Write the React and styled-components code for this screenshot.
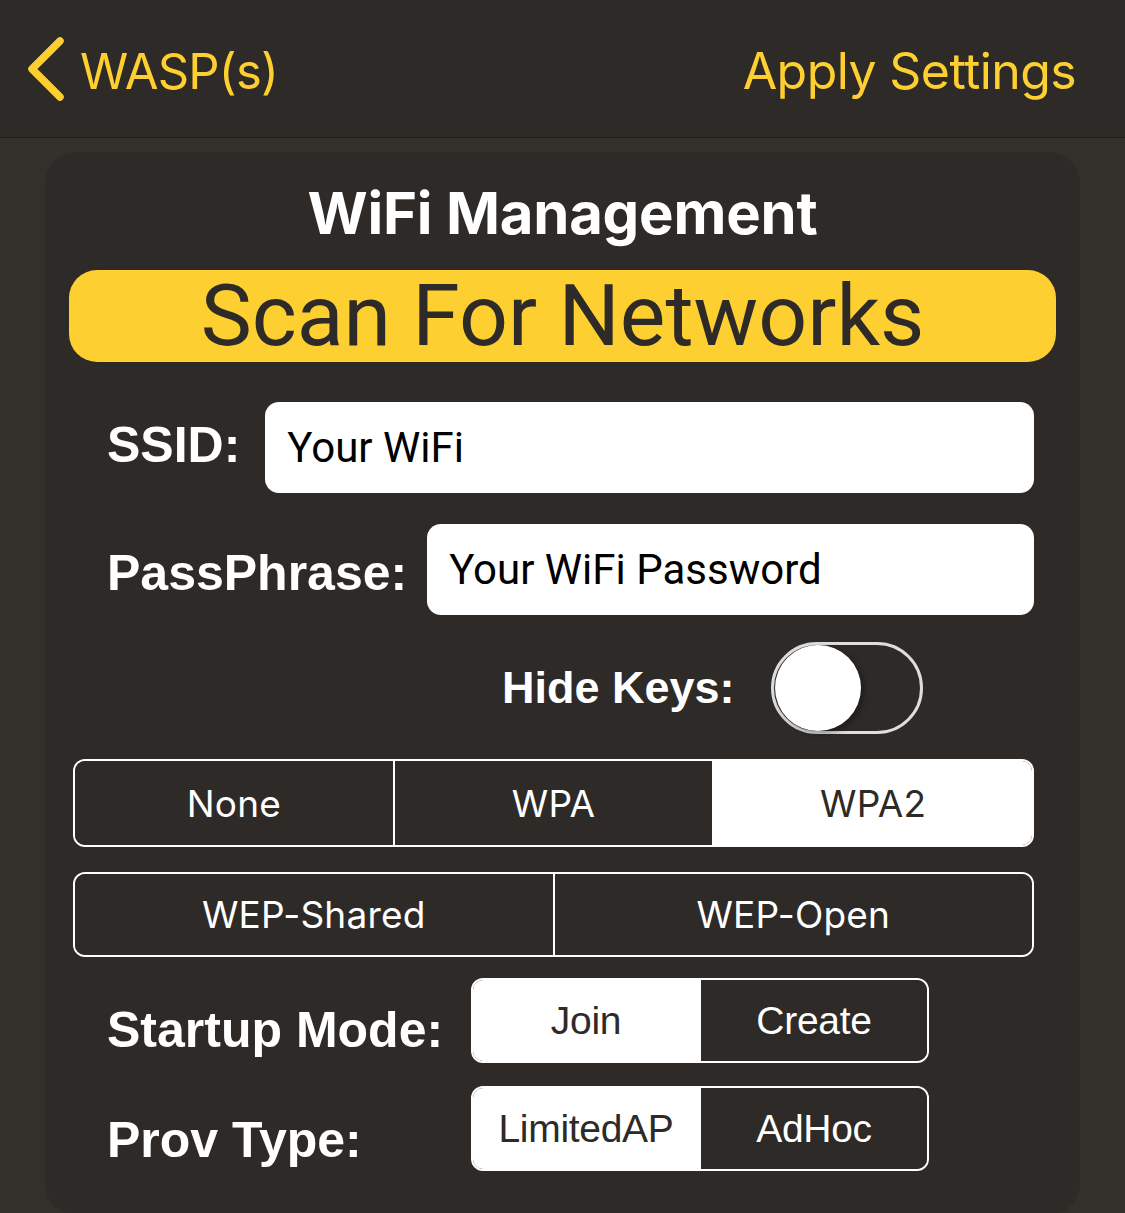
import React, { useState } from "react";
import styled, { createGlobalStyle } from "styled-components";

const Global = createGlobalStyle`
  html, body { margin: 0; padding: 0; background: #33302c; }
  * { box-sizing: border-box; }
`;

const Page = styled.div`
  width: 1125px;
  height: 1213px;
  overflow: hidden;
  background: #33302c;
`;

const Header = styled.header`
  height: 138px;
  background: #2e2a27;
  border-bottom: 1px solid #201d1b;
  display: flex;
  align-items: center;
  justify-content: space-between;
  padding: 0 49px 0 27px;
`;

const NavButton = styled.div`
  display: flex;
  align-items: center;
  gap: 15px;
  color: #fecf30;
  font-family: Inter, "Noto Sans", sans-serif;
  font-size: ${(p) => p.$size || 50}px;
  letter-spacing: ${(p) => p.$track || -1}px;
  line-height: 1;
  margin-top: ${(p) => p.$offset || 0}px;
`;

const NavText = styled.span`
  position: relative;
  top: ${(p) => p.$shift || 0}px;
`;

const Main = styled.main`
  padding: 14px 45px 0 45px;
`;

const Card = styled.section`
  background: #2e2a27;
  border-radius: 32px;
  padding: 26px 24px 44px 24px;
  display: flex;
  flex-direction: column;
`;

const Title = styled.h1`
  margin: 0;
  text-align: center;
  color: #ffffff;
  font-family: Inter, "Noto Sans", sans-serif;
  font-weight: 700;
  font-size: 58px;
  line-height: 70px;
  letter-spacing: -0.2px;
`;

const ScanButton = styled.button`
  margin-top: 22px;
  height: 92px;
  width: 100%;
  border: none;
  border-radius: 28px;
  background: #fecf30;
  color: #2e2a27;
  font-family: Roboto, "Liberation Sans", sans-serif;
  font-size: 86px;
  line-height: 92px;
  padding: 0;
  cursor: pointer;
`;

const FieldRow = styled.div`
  margin-top: ${(p) => p.$mt}px;
  height: ${(p) => p.$h}px;
  display: flex;
  align-items: center;
  gap: ${(p) => p.$gap || 27}px;
  padding: 0 22px 0 ${(p) => p.$pl || 38}px;
`;

const Label = styled.label`
  color: #ffffff;
  font-family: "Liberation Sans", Arial, sans-serif;
  font-weight: 700;
  font-size: ${(p) => p.$size || 50}px;
  white-space: nowrap;
  flex: none;
  width: ${(p) => (p.$w ? `${p.$w}px` : "auto")};
  margin-top: ${(p) => p.$offset || 0}px;
`;

const TextInput = styled.input`
  flex: 1;
  min-width: 0;
  height: 100%;
  border: none;
  outline: none;
  border-radius: 14px;
  background: #ffffff;
  padding: 0 0 0 22px;
  font-family: Roboto, "Liberation Sans", sans-serif;
  font-size: 42px;
  color: #000000;
`;

const ToggleTrack = styled.button`
  flex: none;
  width: 152px;
  height: 92px;
  border-radius: 46px;
  border: 3px solid #dedede;
  background: ${(p) => (p.$on ? "#fecf30" : "transparent")};
  padding: 0;
  position: relative;
  cursor: pointer;
`;

const ToggleKnob = styled.span`
  position: absolute;
  top: 0px;
  left: ${(p) => (p.$on ? 62 : 1)}px;
  width: 86px;
  height: 86px;
  border-radius: 50%;
  background: #ffffff;
  box-shadow: 3px 3px 6px rgba(0, 0, 0, 0.35);
`;

const Segmented = styled.div`
  margin-top: ${(p) => p.$mt}px;
  margin-left: ${(p) => p.$ml || 0}px;
  margin-right: ${(p) => p.$mr || 0}px;
  width: ${(p) => (p.$w ? `${p.$w}px` : "auto")};
  height: ${(p) => p.$h}px;
  border: 2px solid #ffffff;
  border-radius: 12px;
  overflow: hidden;
  display: flex;
  flex: none;
`;

const Segment = styled.button`
  flex: ${(p) => p.$grow || 1};
  border: none;
  border-left: ${(p) => (p.$first ? "none" : "2px solid #ffffff")};
  background: ${(p) => (p.$active ? "#ffffff" : "#2e2a27")};
  color: ${(p) => (p.$active ? "#2e2a27" : "#ffffff")};
  font-family: ${(p) =>
    p.$helv ? `"Liberation Sans", Arial, sans-serif` : `Inter, "Noto Sans", sans-serif`};
  font-size: ${(p) => (p.$helv ? 39 : 37)}px;
  letter-spacing: ${(p) => (p.$helv ? -0.3 : 0.2)}px;
  padding: 0;
  cursor: pointer;
`;

const Chevron = () => (
  <svg width="38" height="66" viewBox="0 0 38 66" fill="none">
    <polyline
      points="33,5 5,33 33,61"
      stroke="#fecf30"
      strokeWidth="7.5"
      strokeLinecap="round"
      strokeLinejoin="round"
    />
  </svg>
);

export default function App() {
  const [hide, setHide] = useState(false);
  const [sec, setSec] = useState("WPA2");
  const [mode, setMode] = useState("Join");
  const [prov, setProv] = useState("LimitedAP");

  return (
    <Page>
      <Global />
      <Header>
        <NavButton $size={49} $track={-0.8}>
          <Chevron />
          <NavText $shift={3}>WASP(s)</NavText>
        </NavButton>
        <NavButton $size={50} $track={-0.6} $offset={4}>
          Apply Settings
        </NavButton>
      </Header>
      <Main>
        <Card>
          <Title>WiFi Management</Title>
          <ScanButton>Scan For Networks</ScanButton>

          <FieldRow $mt={40} $h={91} $gap={25}>
            <Label $offset={-6}>SSID:</Label>
            <TextInput defaultValue="Your WiFi" />
          </FieldRow>

          <FieldRow $mt={31} $h={91} $gap={20}>
            <Label $offset={6}>PassPhrase:</Label>
            <TextInput defaultValue="Your WiFi Password" />
          </FieldRow>

          <FieldRow $mt={27} $h={92} $gap={36} $pl={433}>
            <Label $size={45}>Hide Keys:</Label>
            <ToggleTrack $on={hide} onClick={() => setHide(!hide)}>
              <ToggleKnob $on={hide} />
            </ToggleTrack>
          </FieldRow>

          <Segmented $mt={25} $h={88} $ml={4} $mr={22}>
            {["None", "WPA", "WPA2"].map((s, i) => (
              <Segment
                key={s}
                $first={i === 0}
                $active={sec === s}
                onClick={() => setSec(s)}
              >
                {s}
              </Segment>
            ))}
          </Segmented>

          <Segmented $mt={25} $h={85} $ml={4} $mr={22}>
            {["WEP-Shared", "WEP-Open"].map((s, i) => (
              <Segment
                key={s}
                $first={i === 0}
                $active={sec === s}
                onClick={() => setSec(s)}
              >
                {s}
              </Segment>
            ))}
          </Segmented>

          <FieldRow $mt={21} $h={85} $gap={25}>
            <Label $offset={18} $w={339}>Startup Mode:</Label>
            <Segmented $mt={0} $h={85} $w={458}>
              {["Join", "Create"].map((s, i) => (
                <Segment
                  key={s}
                  $helv
                  $first={i === 0}
                  $active={mode === s}
                  onClick={() => setMode(s)}
                >
                  {s}
                </Segment>
              ))}
            </Segmented>
          </FieldRow>

          <FieldRow $mt={23} $h={85} $gap={25}>
            <Label $offset={22} $w={339}>Prov Type:</Label>
            <Segmented $mt={0} $h={85} $w={458}>
              {["LimitedAP", "AdHoc"].map((s, i) => (
                <Segment
                  key={s}
                  $helv
                  $first={i === 0}
                  $active={prov === s}
                  onClick={() => setProv(s)}
                >
                  {s}
                </Segment>
              ))}
            </Segmented>
          </FieldRow>
        </Card>
      </Main>
    </Page>
  );
}
